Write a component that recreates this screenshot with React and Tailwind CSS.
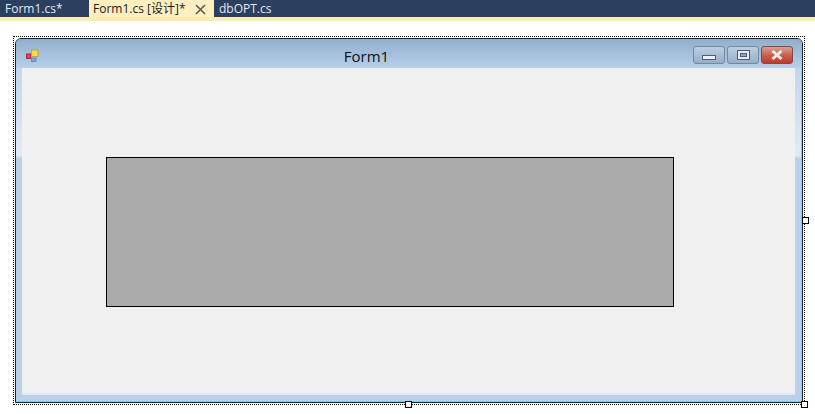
const TABS = [
  { label: 'Form1.cs*', active: false, width: 'w-[89px]' },
  { label: 'Form1.cs [设计]*', active: true, width: 'w-[125px]' },
  { label: 'dbOPT.cs', active: false, width: 'w-[70px]' },
]

const FONT = 'font-["Open_Sans","Noto_Sans_CJK_SC",sans-serif]'

function Handle({ className }) {
  return <div className={`absolute w-[7px] h-[7px] bg-white border border-black ${className}`} />
}

function FormIcon() {
  return (
    <svg width="14" height="14" viewBox="0 0 14 14" className="ml-[5px] mt-[4px] shrink-0">
      <rect x="0.5" y="5" width="4.5" height="4.5" fill="#e0425a" stroke="#a8283c" />
      <rect x="5.5" y="1" width="6.5" height="6.5" fill="#f7dc4a" stroke="#c4a43c" />
      <rect x="5.5" y="9" width="4.5" height="3.5" fill="#7fa3dc" stroke="#6a8ac0" />
    </svg>
  )
}

function CaptionButtons() {
  return (
    <div className="flex gap-[2px] mr-[9px] mt-[3px]">
      <div className="w-[32px] h-[18px] rounded-[3px] border border-[#6f88a3] bg-gradient-to-b from-[#bccfe2] to-[#97afc6] flex items-center justify-center">
        <div className="w-[14px] h-[5px] mt-[5px] bg-[#eef2f6] border border-[#4d5d72]" />
      </div>
      <div className="w-[32px] h-[18px] rounded-[3px] border border-[#6f88a3] bg-gradient-to-b from-[#bccfe2] to-[#97afc6] flex items-center justify-center">
        <div className="w-[13px] h-[10px] border border-[#4d5d72] bg-[#e4eaf0] flex items-center justify-center">
          <div className="w-[7px] h-[4px] bg-[#8ea9c6] border border-[#4d5d72]" />
        </div>
      </div>
      <div className="w-[32px] h-[18px] rounded-[3px] border border-[#7c4a4a] bg-gradient-to-b from-[#d9a097] via-[#c9604f] to-[#c0392b] flex items-center justify-center">
        <svg width="14" height="10" viewBox="0 0 14 10">
          <path d="M2.5 1 L11.5 9 M11.5 1 L2.5 9" stroke="#f2eeea" strokeWidth="2.8" />
        </svg>
      </div>
    </div>
  )
}

export default function App() {
  return (
    <div className={`w-[815px] h-[414px] overflow-hidden bg-white flex flex-col ${FONT}`}>
      <div className="h-[17px] bg-[#2b3f5e] flex">
        {TABS.map(tab => (
          <div
            key={tab.label}
            className={`${tab.width} h-[17px] flex items-center text-[12px] leading-none whitespace-nowrap ${
              tab.active ? 'bg-[#fdefc0] text-[#1c1c1c] pl-[4px]' : 'text-[#e4e8ee] pl-[5px]'
            }`}
          >
            {tab.label}
            {tab.active && (
              <svg width="11" height="11" viewBox="0 0 11 11" className="ml-[9px] mt-[1px]">
                <path d="M1 1 L10 10 M10 1 L1 10" stroke="#5c5a50" strokeWidth="1.6" />
              </svg>
            )}
          </div>
        ))}
      </div>
      <div className="h-[4px] bg-[#fdebb4]" />

      <div className="pl-[13px] pt-[15px]">
        <div className="relative w-[792px] h-[369px] border border-dotted border-black p-[1px]">
          <div className="w-[788px] h-[365px] rounded-t-[6px] border border-[#1a2430] bg-[linear-gradient(to_bottom,#b6d0ec_0%,#e0ebf7_32%,#b9d0e8_33%,#b9d0e8_100%)] flex flex-col">
            <div className="h-[29px] shrink-0 rounded-t-[5px] bg-gradient-to-b from-[#93aecb] to-[#b6d0ec] flex items-center pl-[5px]">
              <FormIcon />
              <div className="flex-1 text-center text-[15px] text-[#101010] pr-[8px] pl-[8px] mt-[5px]">Form1</div>
              <CaptionButtons />
            </div>
            <div className="flex-1 pl-[6px] pr-[6px] pb-[6px] border-b border-r border-[#7fd0ea] flex">
              <div className="flex-1 bg-[#f0f0f0] pl-[84px] pt-[89px] border-b-2 border-[#dfe8f4]">
                <div className="w-[568px] h-[150px] bg-[#aaaaaa] border border-black" />
              </div>
            </div>
          </div>
          <Handle className="right-[-5px] top-[180px]" />
          <Handle className="left-[391px] bottom-[-4px]" />
          <Handle className="right-[-4px] bottom-[-4px]" />
        </div>
      </div>
    </div>
  )
}
